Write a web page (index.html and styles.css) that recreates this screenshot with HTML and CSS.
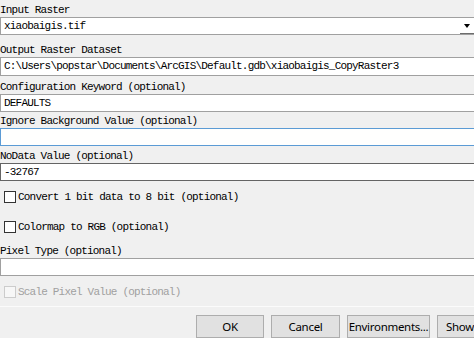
FILE: index.html
```html
<!DOCTYPE html>
<html lang="en">
<head>
    <meta charset="UTF-8">
    <meta name="viewport" content="width=device-width, initial-scale=1.0">
    <title>Copy Raster</title>
    <link rel="stylesheet" href="styles.css">
</head>
<body>

    <div class="dialog">
        <div class="params">
            <div class="group g-input">
                <label>Input Raster</label>
                <div class="field combo">
                    <span>xiaobaigis.tif</span>
                    <span class="arrow"></span>
                </div>
            </div>

            <div class="group g-output">
                <label>Output Raster Dataset</label>
                <div class="field">C:\Users\popstar\Documents\ArcGIS\Default.gdb\xiaobaigis_CopyRaster3</div>
            </div>

            <div class="group g-config">
                <label>Configuration Keyword (optional)</label>
                <div class="field">DEFAULTS</div>
            </div>

            <div class="group g-ignore">
                <label>Ignore Background Value (optional)</label>
                <div class="field focus"></div>
            </div>

            <div class="group g-nodata">
                <label>NoData Value (optional)</label>
                <div class="field dark">-32767</div>
            </div>

            <div class="check c-convert">
                <span class="box"></span>
                <span>Convert 1 bit data to 8 bit (optional)</span>
            </div>

            <div class="check c-colormap">
                <span class="box"></span>
                <span>Colormap to RGB (optional)</span>
            </div>

            <div class="group g-pixel">
                <label>Pixel Type (optional)</label>
                <div class="field"></div>
            </div>

            <div class="check c-scale disabled">
                <span class="box"></span>
                <span>Scale Pixel Value (optional)</span>
            </div>
        </div>

        <div class="buttons">
            <button>OK</button>
            <button class="cancel">Cancel</button>
            <button class="env">Environments...</button>
            <button class="help">Show Help &gt;&gt;</button>
        </div>
    </div>

</body>
</html>
```

FILE: styles.css
```css
body {
    margin: 0;
    background: #f0f0f0;
    color: #000;
    font-family: "Liberation Mono", monospace;
    font-size: 11px;
    letter-spacing: -0.8px;
    overflow: hidden;
}

.dialog {
    width: 474px;
    height: 338px;
    display: flex;
    flex-direction: column;
    overflow: hidden;
}

/* Parameter list */
.params {
    display: flex;
    flex-direction: column;
    border-bottom: 1px solid #fbfbfb;
    padding-bottom: 8px;
}

.group {
    display: flex;
    flex-direction: column;
}

.group label {
    height: 14px;
    line-height: 14px;
    white-space: nowrap;
}

.field {
    height: 18px;
    line-height: 16px;
    box-sizing: border-box;
    width: 480px;
    padding-left: 3px;
    background: #fff;
    border: 1px solid #a0a0a0;
    white-space: nowrap;
    overflow: hidden;
}

.field.dark {
    border-color: #646464;
}

.field.focus {
    border-color: #5b9bd5;
    background: #fffffe;
}

.combo {
    width: 474px;
    display: flex;
    justify-content: space-between;
    align-items: center;
    border-right: none;
}

/* dropdown arrow with its underline */
.arrow {
    width: 14px;
    height: 16px;
    box-sizing: border-box;
    border-bottom: 1px solid #6d6d6d;
    display: flex;
    justify-content: center;
    align-items: center;
}

.arrow::before {
    content: "";
    border-left: 3px solid transparent;
    border-right: 3px solid transparent;
    border-top: 4px solid #000;
}

.g-input { margin-top: 3px; }
.g-output { margin-top: 8px; }
.g-output .field { height: 19px; line-height: 17px; }
.g-config { margin-top: 4px; }
.g-ignore { margin-top: 2px; }
.g-nodata { margin-top: 3px; }
.g-pixel { margin-top: 11px; }

/* Checkboxes */
.check {
    display: flex;
    align-items: center;
    height: 13px;
    padding-left: 4px;
    gap: 2px;
    white-space: nowrap;
}

.check .box {
    width: 12px;
    height: 12px;
    box-sizing: border-box;
    border: 1px solid #333;
    background: #fff;
    flex: none;
}

.c-convert { margin-top: 9px; }
.c-colormap { margin-top: 17px; }
.c-scale { margin-top: 9px; }

.disabled {
    color: #a0a0a0;
}

.disabled .box {
    border-color: #cccccc;
    background: #f7f7f7;
}

/* Bottom buttons */
.buttons {
    display: flex;
    gap: 7px;
    padding-left: 196px;
    margin-top: 8px;
}

button {
    font-family: "Noto Sans", sans-serif;
    font-size: 11.5px;
    letter-spacing: -0.3px;
    height: 23px;
    width: 68px;
    padding: 0;
    background: #e1e1e1;
    border: 1px solid #adadad;
    color: #000;
    flex: none;
    white-space: nowrap;
}

.cancel { width: 69px; }
.env { width: 83px; }
.help { width: 80px; text-align: left; padding-left: 8px; }
```
